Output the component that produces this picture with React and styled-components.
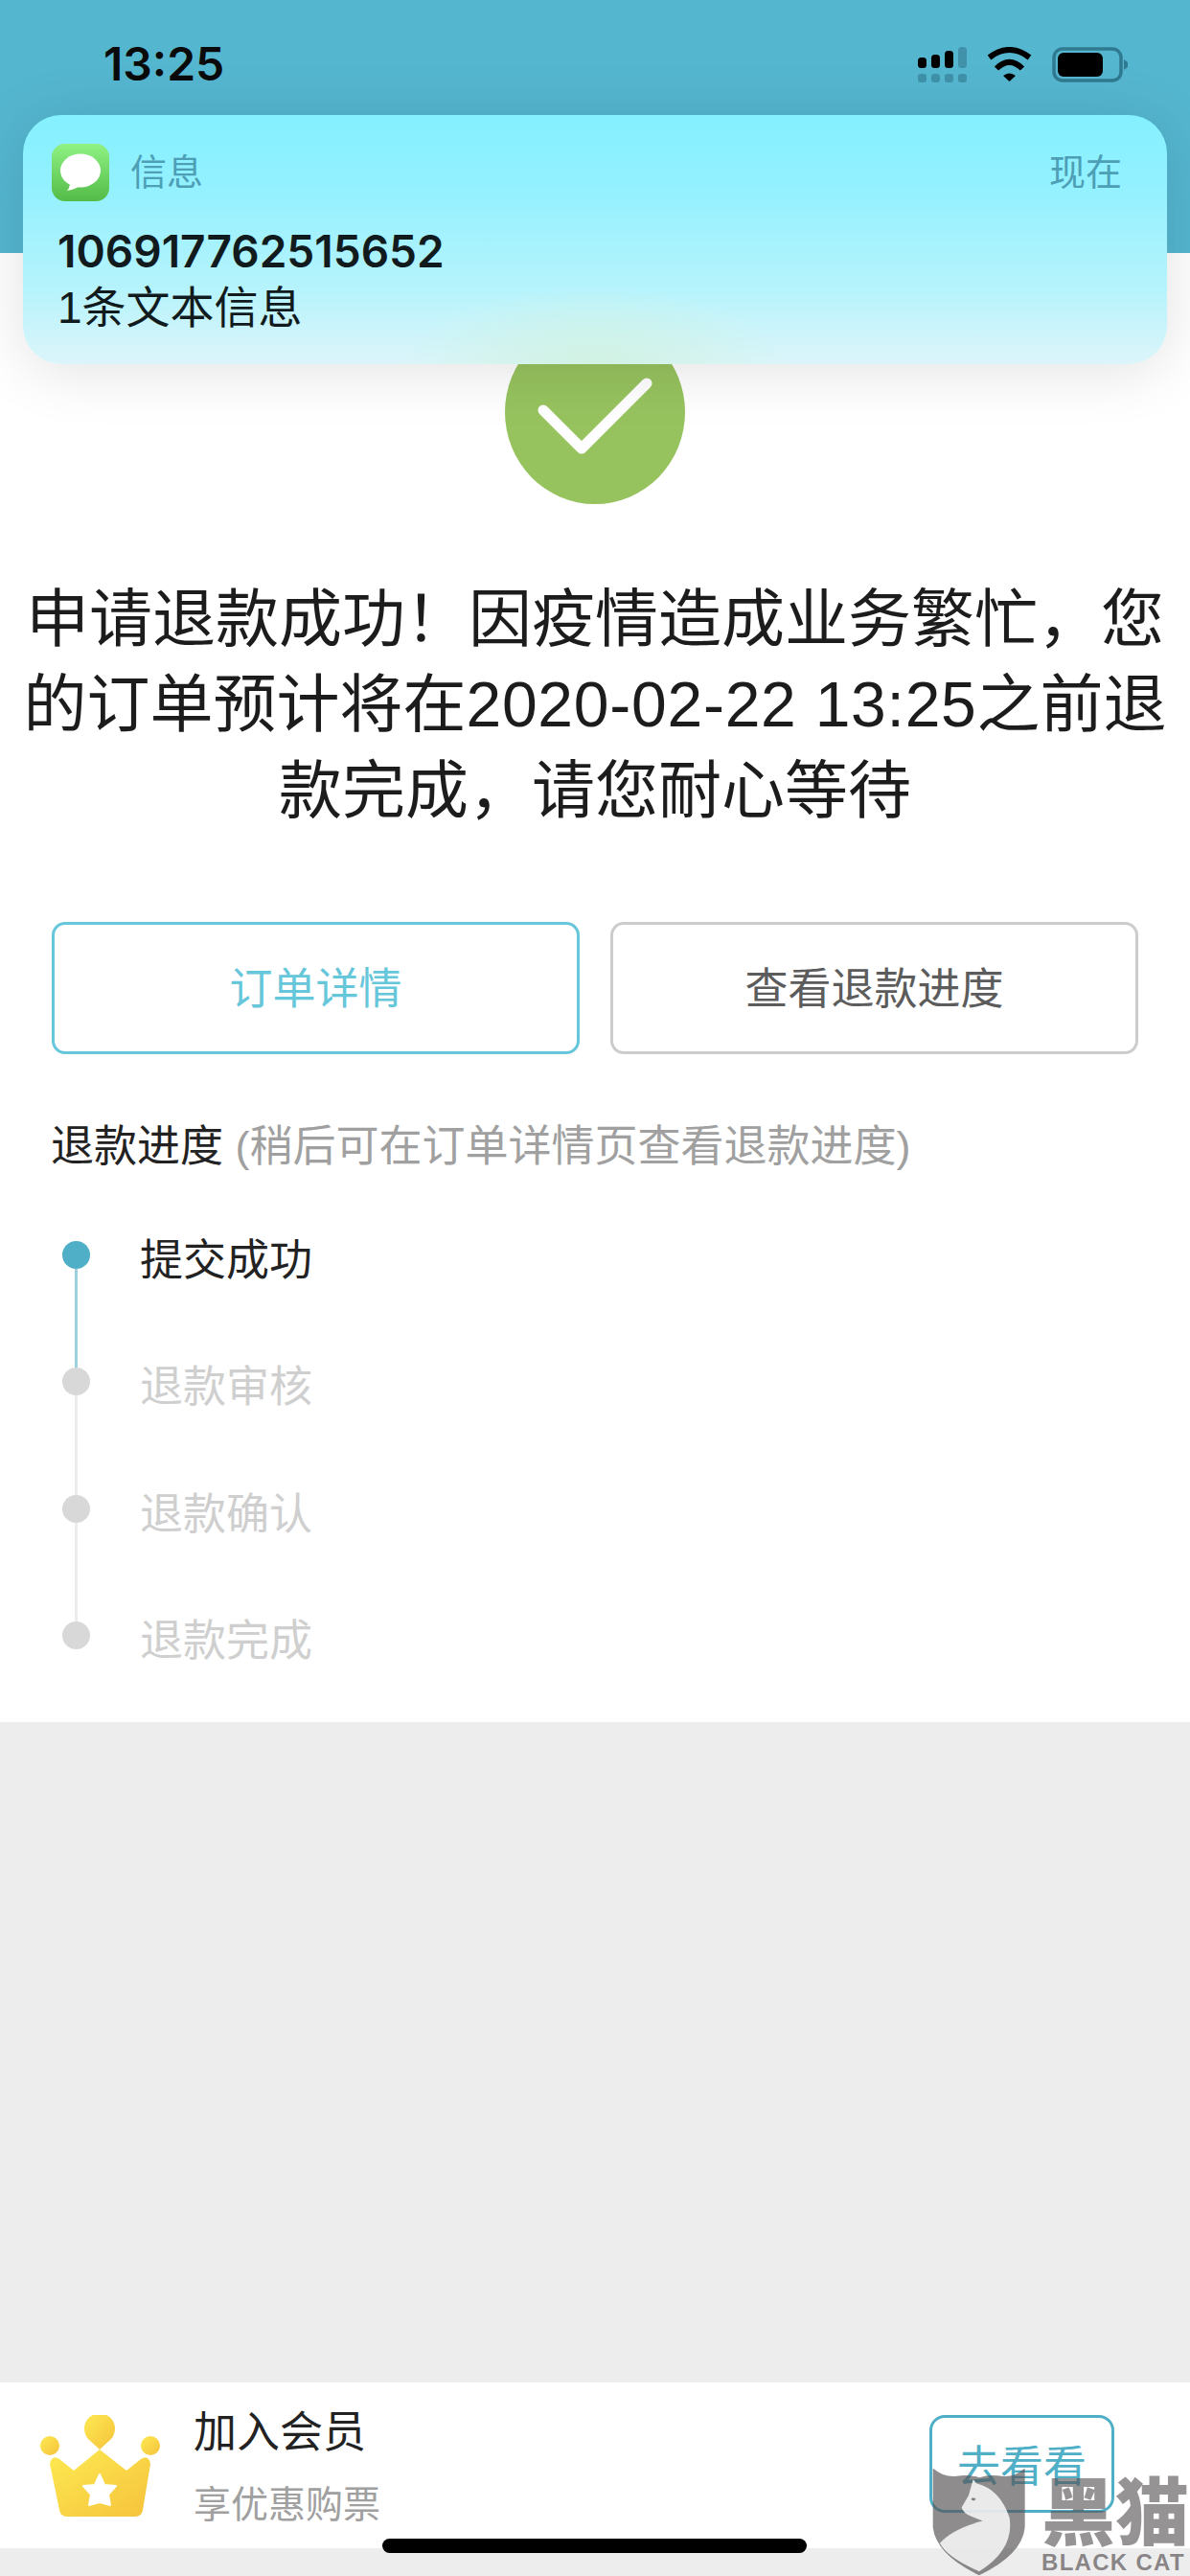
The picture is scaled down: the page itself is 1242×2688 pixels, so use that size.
import React from "react";
import styled, { createGlobalStyle } from "styled-components";

const GlobalStyle = createGlobalStyle`
  html, body {
    margin: 0;
    padding: 0;
    background: #ededed;
  }
  body {
    font-family: "Liberation Sans", "Noto Sans CJK SC", sans-serif;
  }
`;

const Page = styled.div`
  position: relative;
  display: flex;
  flex-direction: column;
  width: 1242px;
  height: 2688px;
  overflow: hidden;
  background: #ededed;
`;

const Header = styled.header`
  flex: none;
  height: 264px;
  background: #55b6d0;
`;

const StatusBar = styled.div`
  display: flex;
  align-items: center;
  justify-content: space-between;
  padding: 48px 65px 0 108px;
`;

const Clock = styled.span`
  font-family: Inter, "Liberation Sans", sans-serif;
  font-size: 48px;
  font-weight: 600;
  line-height: 38px;
  color: #0a0a0a;
`;

const StatusIcons = styled.div`
  display: flex;
  align-items: center;
  gap: 21px;
`;

const Notice = styled.div`
  position: absolute;
  top: 120px;
  left: 24px;
  width: 1194px;
  height: 260px;
  box-sizing: border-box;
  padding: 30px 47px 0 30px;
  border-radius: 40px;
  background:
    radial-gradient(ellipse 200px 80px at 50% 100%, #d0f2e2 0%, rgba(208, 242, 226, 0) 100%),
    linear-gradient(180deg, #84f0ff 0%, #94f1ff 30%, #b4f3fc 68%, #dcf5fa 100%);
  box-shadow: 0 6px 64px rgba(0, 0, 0, 0.12);
`;

const NoticeHead = styled.div`
  display: flex;
  align-items: center;
  gap: 22px;
`;

const NoticeApp = styled.span`
  flex: 1;
  font-size: 38px;
  line-height: 54px;
  color: #4d9fb6;
`;

const NoticeTime = styled.span`
  font-size: 38px;
  line-height: 54px;
  color: #4d9fb6;
`;

const NoticeBody = styled.div`
  padding: 22px 0 0 6px;
`;

const NoticeSender = styled.div`
  font-family: Inter, "Liberation Sans", sans-serif;
  font-size: 46px;
  font-weight: 600;
  line-height: 60px;
  color: #111b1d;
`;

const NoticeText = styled.div`
  font-family: "Liberation Sans", "Noto Sans CJK SC", sans-serif;
  font-size: 46px;
  line-height: 58px;
  color: #111b1d;
`;

const Main = styled.main`
  flex: none;
  display: flex;
  flex-direction: column;
  align-items: stretch;
  box-sizing: border-box;
  height: 1533px;
  padding-top: 70px;
  background: #fff;
`;

const Badge = styled.div`
  align-self: center;
  display: flex;
  align-items: center;
  justify-content: center;
  width: 188px;
  height: 192px;
  border-radius: 50%;
  background: #97c35f;
`;

const Message = styled.p`
  margin: 76px 0 0;
  padding: 0 24px;
  font-size: 66px;
  line-height: 89.4px;
  text-align: center;
  color: #1c1c1c;
`;

const MessageDate = styled.span`
  letter-spacing: 0.75px;
`;

const Actions = styled.div`
  display: flex;
  gap: 32px;
  margin-top: 92px;
  padding: 0 54px;
`;

const ActionButton = styled.button`
  flex: 1;
  height: 138px;
  padding: 0 0 6px;
  border: 3px solid ${(p) => (p.$primary ? "#66c6da" : "#cccccc")};
  border-radius: 14px;
  background: #fff;
  font-family: "Noto Sans CJK SC", sans-serif;
  font-size: 45px;
  color: ${(p) => (p.$primary ? "#66c6da" : "#5c5c5c")};
`;

const SectionTitle = styled.div`
  margin-top: 67px;
  padding-left: 53px;
  font-size: 45px;
  line-height: 60px;
  color: #222;
`;

const SectionHint = styled.span`
  color: #a0a0a0;
`;

const Steps = styled.div`
  display: flex;
  flex-direction: column;
  margin-top: 68px;
  padding-left: 65px;
`;

const Step = styled.div`
  display: flex;
  align-items: flex-start;
  gap: 52px;
  height: 132.2px;
`;

const Rail = styled.div`
  display: flex;
  flex-direction: column;
  align-items: center;
  width: 29px;
  height: 100%;
`;

const Dot = styled.div`
  flex: none;
  width: 29px;
  height: 29px;
  border-radius: 50%;
  background: ${(p) => (p.$done ? "#4fafc7" : "#d8d8d8")};
`;

const RailLine = styled.div`
  flex: 1;
  width: 3px;
  background: ${(p) => (p.$done ? "#9cd1dd" : "#ececec")};
`;

const StepLabel = styled.span`
  font-size: 45px;
  line-height: 41px;
  color: ${(p) => (p.$done ? "#222" : "#cfcfcf")};
`;

const Filler = styled.div`
  flex: 1;
`;

const MemberBar = styled.div`
  flex: none;
  display: flex;
  align-items: center;
  box-sizing: border-box;
  height: 173px;
  padding: 0 79px 0 41px;
  background: #fff;
`;

const MemberText = styled.div`
  flex: 1;
  display: flex;
  flex-direction: column;
  gap: 25px;
  margin: 8px 0 0 34px;
`;

const MemberTitle = styled.div`
  font-size: 45px;
  line-height: 50px;
  color: #222;
`;

const MemberSub = styled.div`
  font-size: 39px;
  line-height: 50px;
  color: #a0a0a0;
`;

const GoButton = styled.button`
  width: 193px;
  height: 102px;
  margin-bottom: 4px;
  padding: 0;
  border: 3px solid #4fafc7;
  border-radius: 16px;
  background: #fff;
  font-family: "Noto Sans CJK SC", sans-serif;
  font-size: 45px;
  color: #4fafc7;
`;

const Footer = styled.div`
  flex: none;
  height: 29px;
`;

const HomeBar = styled.div`
  position: absolute;
  left: 399px;
  top: 2649px;
  width: 443px;
  height: 15px;
  border-radius: 8px;
  background: #000;
`;

const Watermark = styled.div`
  position: absolute;
  left: 972px;
  top: 2572px;
  display: flex;
  gap: 15px;
  width: 270px;
`;

const WatermarkText = styled.div`
  display: flex;
  flex-direction: column;
`;

const WatermarkName = styled.div`
  font-family: "Noto Sans CJK SC", sans-serif;
  font-size: 77px;
  font-weight: 900;
  line-height: 90px;
  white-space: nowrap;
  color: rgba(85, 80, 82, 0.62);
`;

const WatermarkLatin = styled.div`
  font-size: 24px;
  font-weight: 700;
  line-height: 24px;
  letter-spacing: 1.3px;
  white-space: nowrap;
  color: rgba(85, 80, 82, 0.68);
`;

const SignalIcon = () => (
  <svg width="51" height="37" viewBox="0 0 51 37">
    <rect x="0" y="11" width="9" height="11" rx="3.5" fill="#000" />
    <rect x="14" y="8" width="9" height="14" rx="3.5" fill="#000" />
    <rect x="28" y="4" width="9" height="18" rx="3.5" fill="#000" />
    <rect x="42" y="0" width="9" height="22" rx="3.5" fill="#3f92a9" />
    {[0, 14, 28, 42].map((x) => (
      <rect key={x} x={x} y="28" width="9" height="9" rx="3" fill="#3f92a9" />
    ))}
  </svg>
);

const WifiIcon = () => (
  <svg width="47" height="36" viewBox="0 0 47 36">
    <path d="M2.5 11 Q23.5 -5 44.5 11" fill="none" stroke="#000" strokeWidth="6" />
    <path d="M10 22.5 Q23.5 9 37 22.5" fill="none" stroke="#000" strokeWidth="6" />
    <path d="M17 30 Q23.5 25 30 30 L23.5 36 Z" fill="#000" />
  </svg>
);

const BatteryIcon = () => (
  <svg width="79" height="37" viewBox="0 0 79 37">
    <rect x="2" y="2" width="70" height="33" rx="9" fill="none" stroke="#2f7a90" strokeWidth="3.5" />
    <rect x="6" y="6" width="47" height="25" rx="6" fill="#000" />
    <path d="M75 13 L79 16 L79 21 L75 24 Z" fill="#2f7a90" />
  </svg>
);

const MessagesIcon = () => (
  <svg width="60" height="60" viewBox="0 0 60 60">
    <defs>
      <linearGradient id="msgGreen" x1="0" y1="0" x2="0" y2="1">
        <stop offset="0" stopColor="#8ff283" />
        <stop offset="1" stopColor="#53bb47" />
      </linearGradient>
    </defs>
    <rect width="60" height="60" rx="14" fill="url(#msgGreen)" />
    <ellipse cx="30" cy="28" rx="21" ry="17.5" fill="#fff" />
    <path d="M19 40 Q19 46 16 49 Q24 48 29 44 Z" fill="#fff" />
  </svg>
);

const CheckIcon = () => (
  <svg width="188" height="192" viewBox="0 0 188 192">
    <path d="M40 94 L80 134 L148 66" fill="none" stroke="#fff" strokeWidth="11" strokeLinecap="round" strokeLinejoin="round" />
  </svg>
);

const CrownIcon = () => (
  <svg width="127" height="106" viewBox="11 19 127 106">
    <defs>
      <linearGradient id="crownGold" x1="0" y1="0" x2="1" y2="1">
        <stop offset="0" stopColor="#fdea52" />
        <stop offset="1" stopColor="#f6c23b" />
      </linearGradient>
    </defs>
    <g fill="url(#crownGold)">
      <circle cx="22" cy="51" r="10" />
      <circle cx="127" cy="51" r="10" />
      <path d="M74 55 L62 44 A16 16 0 1 1 86 44 Z" />
      <path d="M22 70 Q24 60 32 65 L47 77 L74 55 L102 77 L117 65 Q125 60 127 70 L119 118 Q118 125 111 125 L40 125 Q33 125 32 118 Z" />
    </g>
    <path d="M74 81 L79 92 L91 93 L83 102 L85 113 L74 110 L63 113 L65 102 L57 93 L69 92 Z" fill="#fff" stroke="#fff" strokeWidth="2" strokeLinejoin="round" />
  </svg>
);

const ShieldMark = () => (
  <svg width="100" height="117" viewBox="125 245 300 350">
    <path
      d="M130 255 Q165 285 205 280 Q240 274 275 284 Q310 274 345 280 Q385 285 418 255 L418 440 Q410 525 275 590 Q140 525 130 440 Z"
      fill="rgba(85, 80, 82, 0.66)"
    />
    <path
      d="M256 290 L266 302 Q340 320 370 410 Q385 510 275 578 Q175 535 152 490 Q190 445 286 420 L250 406 Q225 396 220 378 L242 340 Z"
      fill="rgba(255, 255, 255, 0.82)"
    />
    <ellipse cx="257" cy="352" rx="7" ry="4" fill="rgba(85, 80, 82, 0.7)" />
  </svg>
);

const STEPS = ["提交成功", "退款审核", "退款确认", "退款完成"];

const App = () => {
  return (
    <Page>
      <GlobalStyle />
      <Header>
        <StatusBar>
          <Clock>13:25</Clock>
          <StatusIcons>
            <SignalIcon />
            <WifiIcon />
            <BatteryIcon />
          </StatusIcons>
        </StatusBar>
      </Header>
      <Main>
        <Badge>
          <CheckIcon />
        </Badge>
        <Message>
          {"申请退款成功\uFF01因疫情造成业务繁忙\uFF0C您的订单预计将在"}
          <MessageDate>2020-02-22 13:25</MessageDate>
          {"之前退款完成\uFF0C请您耐心等待"}
        </Message>
        <Actions>
          <ActionButton $primary>订单详情</ActionButton>
          <ActionButton>查看退款进度</ActionButton>
        </Actions>
        <SectionTitle>
          退款进度 <SectionHint>(稍后可在订单详情页查看退款进度)</SectionHint>
        </SectionTitle>
        <Steps>
          {STEPS.map((step, i) => (
            <Step key={step}>
              <Rail>
                <Dot $done={i === 0} />
                {i < STEPS.length - 1 && <RailLine $done={i === 0} />}
              </Rail>
              <StepLabel $done={i === 0}>{step}</StepLabel>
            </Step>
          ))}
        </Steps>
      </Main>
      <Filler />
      <MemberBar>
        <CrownIcon />
        <MemberText>
          <MemberTitle>加入会员</MemberTitle>
          <MemberSub>享优惠购票</MemberSub>
        </MemberText>
        <GoButton>去看看</GoButton>
      </MemberBar>
      <Footer />
      <Notice>
        <NoticeHead>
          <MessagesIcon />
          <NoticeApp>信息</NoticeApp>
          <NoticeTime>现在</NoticeTime>
        </NoticeHead>
        <NoticeBody>
          <NoticeSender>106917762515652</NoticeSender>
          <NoticeText>1条文本信息</NoticeText>
        </NoticeBody>
      </Notice>
      <HomeBar />
      <Watermark>
        <ShieldMark />
        <WatermarkText>
          <WatermarkName>黑猫</WatermarkName>
          <WatermarkLatin>BLACK CAT</WatermarkLatin>
        </WatermarkText>
      </Watermark>
    </Page>
  );
};

export default App;
